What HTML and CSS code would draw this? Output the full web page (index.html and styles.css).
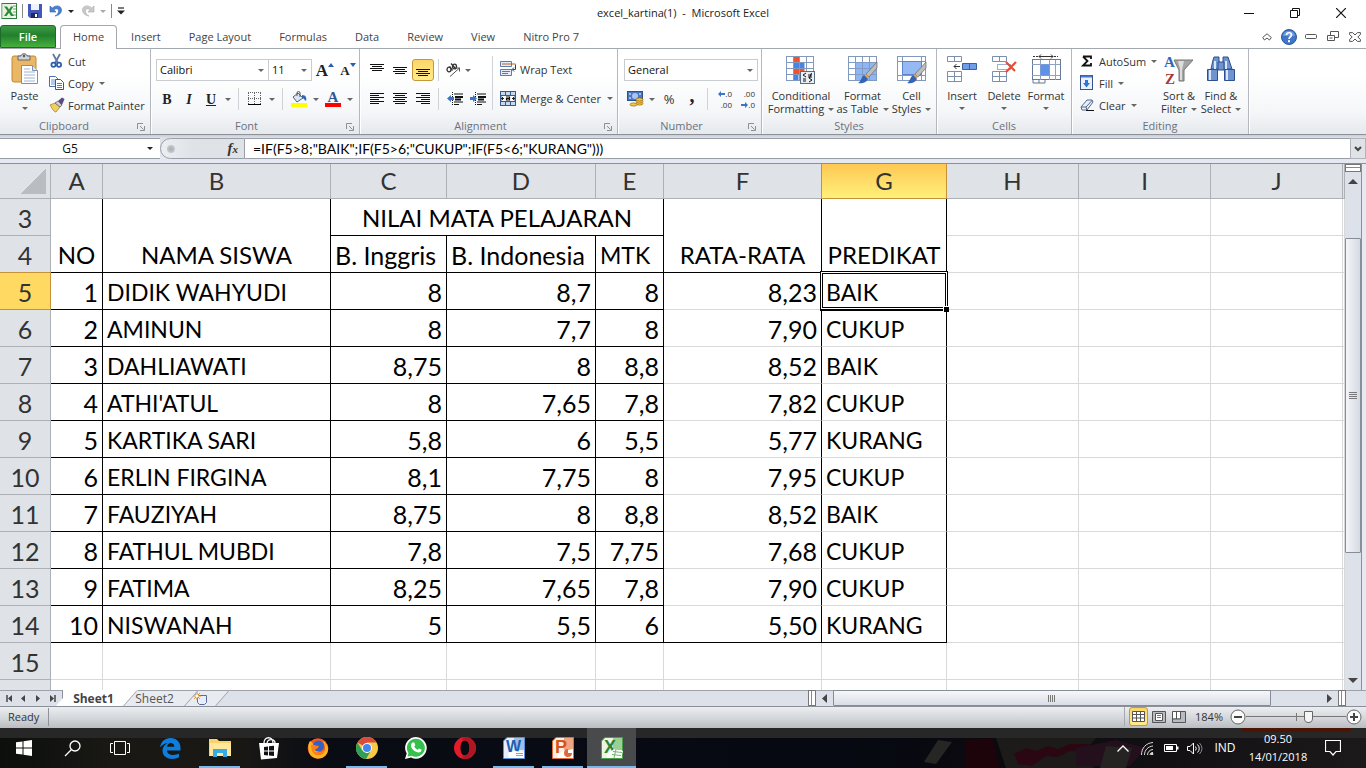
FILE: index.html
```html
<!DOCTYPE html>
<html lang="en">
<head>
	<meta charset="UTF-8">
	<title>excel_kartina(1) - Microsoft Excel</title>
	<link rel="stylesheet" href="styles.css">
</head>
<body>
	<header class="titlebar">
		<div class="quick">
			<svg width="16" height="16" viewBox="0 0 16 16"><rect x="1" y="0.5" width="14.500" height="15" fill="#fff" stroke="#2d7d3a"/><rect x="1.500" y="1" width="10" height="14" fill="#e4f2df"/><path d="M12 3h3M12 6h3M12 9h3M12 12h3" stroke="#58a55c"/><path d="M3 3.500h3l2 3 2-3h2.500L9.500 8l3.500 5h-3L8 9.800 5.500 13H3l3.500-5z" fill="#2b8a35"/></svg>
			<i class="line"></i>
			<button aria-label="Save"><svg width="14" height="14" viewBox="0 0 14 14"><path d="M0 0h14v14H2l-2-2z" fill="#4257b8"/><path d="M3 0h8v6H3z" fill="#eef2fb"/><path d="M3 9h7v5H3z" fill="#20285e"/><path d="M7 10h2v3H7z" fill="#fff"/></svg></button>
			<button class="wide" aria-label="Undo"><svg width="14" height="14" viewBox="0 0 14 14"><path d="M1 2v6h6L5 6c2-2 5-1.500 4.500 1.500C9.300 9.500 8 11 6 12c4-.5 6.500-3 6.500-6C12.500 1.500 7 .5 3.200 4z" fill="#4a80d4" stroke="#2b5fae" stroke-width=".6"/></svg><i class="arr black"></i></button>
			<button class="wide" aria-label="Redo"><svg width="14" height="14" viewBox="0 0 14 14"><path d="M13 2v6H7l2-2c-2-2-5-1.500-4.500 1.500C4.700 9.500 6 11 8 12 4 11.500 1.500 9 1.500 6 1.500 1.500 7 .5 10.800 4z" fill="#c9c9c9" stroke="#aaa" stroke-width=".6"/></svg><i class="arr pale"></i></button>
			<i class="line"></i>
			<button aria-label="Customize Quick Access Toolbar"><svg width="8" height="8" viewBox="0 0 8 8"><path d="M1 1h6" stroke="#222" stroke-width="1.200"/><path d="M0 3.500h8L4 7.500z" fill="#222"/></svg></button>
		</div>
		<h1>excel_kartina(1)&nbsp; -&nbsp; Microsoft Excel</h1>
		<div class="winbtns">
			<button aria-label="Minimize"><svg width="10" height="10"><path d="M0 5.500h10" stroke="#111"/></svg></button>
			<button aria-label="Restore"><svg width="10" height="10" fill="none" stroke="#111"><path d="M.5 2.500h7v7h-7zM2.500 2.500v-2h7v7h-2"/></svg></button>
			<button aria-label="Close"><svg width="10" height="10"><path d="M0 0l10 10M10 0L0 10" stroke="#111" stroke-width="1.200"/></svg></button>
		</div>
	</header>

	<nav class="tabs">
		<button class="file">File</button>
		<button class="on">Home</button>
		<button>Insert</button>
		<button>Page Layout</button>
		<button>Formulas</button>
		<button>Data</button>
		<button>Review</button>
		<button>View</button>
		<button>Nitro Pro 7</button>
		<div class="docbtns">
			<button aria-label="Minimize the Ribbon"><svg width="10" height="8" viewBox="0 0 10 8"><path d="M.7 4.500L5 .8l4.300 3.700L7.500 7 5 5 2.500 7z" fill="#fff" stroke="#555"/></svg></button>
			<button aria-label="Help"><svg width="16" height="16" viewBox="0 0 16 16"><circle cx="8" cy="8" r="7.500" fill="#3f76c6" stroke="#2a56a0"/><path d="M2 7a6 5 0 0 1 12 0z" fill="#6d9be0"/><path d="M5.500 6C5.500 3 10.500 3 10.500 6 10.500 7.800 8 7.800 8 10" fill="none" stroke="#fff" stroke-width="1.700"/><rect x="7" y="11.200" width="2" height="2" fill="#fff"/></svg></button>
			<button aria-label="Minimize Window"><svg width="12" height="6"><rect x=".5" y=".5" width="11" height="4" rx="1" fill="#fff" stroke="#555"/></svg></button>
			<button aria-label="Restore Window"><svg width="12" height="11" fill="#fff" stroke="#555"><path d="M3.500.5h8v6h-8z"/><path d="M.5 4.500h7v5h-7z"/><path d="M2.500 7h3"/></svg></button>
			<button aria-label="Close Window"><svg width="12" height="10" viewBox="0 0 12 10"><path d="M.6.6h3L6 3 8.400.6h3v2L8.800 5l2.600 2.400v2h-3L6 7 3.600 9.400h-3v-2L3.200 5 .6 2.600z" fill="#fff" stroke="#555"/></svg></button>
		</div>
	</nav>

	<div class="ribbon">
		<section class="group clipboard">
			<div class="tools">
				<button class="big"><svg width="32" height="32" viewBox="0 0 32 32"><rect x="3" y="3" width="24" height="26" rx="2" fill="#e9b765" stroke="#c08a35"/><path d="M9 3h3c0-3 6-3 6 0h3v4H9z" fill="#cfd3d8" stroke="#666"/><circle cx="15" cy="3" r="1.200" fill="#555"/><path d="M12.500 12.500h11l5 5v13h-16z" fill="#fff" stroke="#7c8fb0"/><path d="M23.500 12.500v5h5" fill="#dfe7f3" stroke="#7c8fb0"/><path d="M15 16h6M15 19h11M15 22h11M15 25h11M15 28h11" stroke="#9db4d6"/></svg><span>Paste</span><i class="arr"></i></button>
				<div class="stack">
					<button><svg width="16" height="16" viewBox="0 0 16 16"><path d="M4 1l5 9M11 1L6 10" stroke="#63779b" stroke-width="1.800" fill="none"/><g fill="none" stroke="#2b5fae" stroke-width="1.800"><circle cx="4.500" cy="11.800" r="2.100"/><circle cx="10" cy="11.800" r="2.100"/></g></svg>Cut</button>
					<button><svg width="16" height="16" viewBox="0 0 16 16"><path d="M.5 1.500h6l3 3v7h-9z" fill="#fff" stroke="#4a6fae"/><path d="M2 5h4M2 7h4M2 9h4" stroke="#6c92cf"/><path d="M6.500 4.500h5l3 3v7h-8z" fill="#fff" stroke="#2f569c"/><path d="M8 8.500h5M8 10.500h5M8 12.500h5" stroke="#4f7ac0"/></svg>Copy<i class="arr"></i></button>
					<button><svg width="16" height="16" viewBox="0 0 16 16"><path d="M1 8l5-2 5 4-4 5c-2 0-3-2-6-7z" fill="#f0cf62" stroke="#9b7a22" stroke-width=".7"/><path d="M6 6l3-2 4 4-2 2z" fill="#ccc" stroke="#555" stroke-width=".7"/><path d="M9 4l4-3.500 2.500 1.500-2.500 6z" fill="#5b4a86"/></svg>Format Painter</button>
				</div>
			</div>
			<footer>Clipboard<svg class="launch" width="8" height="8"><path d="M.5 6V.5H6M3 3l3.500 3.500M7.500 3v4.500H3" fill="none" stroke="#8b9097"/></svg></footer>
		</section>

		<section class="group font">
			<div class="rows">
				<div class="row">
					<label class="pick family"><select aria-label="Font"><option>Calibri</option></select></label>
					<label class="pick size"><select aria-label="Font size"><option>11</option></select></label>
					<button class="ib grow" aria-label="Grow Font"><b class="serif big-a">A</b><svg width="6" height="4"><path d="M0 4l3-4 3 4z" fill="#2b5fae"/></svg></button>
					<button class="ib" aria-label="Shrink Font"><b class="serif small-a">A</b><svg width="6" height="4"><path d="M0 0l3 4 3-4z" fill="#2b5fae"/></svg></button>
				</div>
				<div class="row">
					<button class="ib"><b class="serif">B</b></button>
					<button class="ib"><b class="serif"><em>I</em></b></button>
					<button class="ib"><b class="serif"><u>U</u></b></button>
					<i class="dd"></i>
					<i class="vsep"></i>
					<button class="ib" aria-label="Borders"><svg width="14" height="14"><path d="M.5 1v11M6.500 1v11M12.500 1v11M0 .5h13M0 6.500h13" stroke="#666" stroke-dasharray="1 1"/><path d="M0 12.500h13" stroke="#000"/></svg></button>
					<i class="dd"></i>
					<i class="vsep"></i>
					<button class="ib" aria-label="Fill Color"><svg width="18" height="17" viewBox="0 0 18 17"><path d="M3 6l5-4 5 5-6 4z" fill="#dce6f2" stroke="#46618c"/><path d="M7 5V2a1.500 1.500 0 0 1 3 0v4" fill="none" stroke="#555"/><path d="M12 4c4 0 5 3 4 6-2-1-2-3-4-3z" fill="#2f67b8"/><rect x="1" y="12" width="16" height="4" fill="#ff0"/></svg></button>
					<i class="dd"></i>
					<button class="ib fontcolor" aria-label="Font Color"><b class="serif">A</b></button>
					<i class="dd"></i>
				</div>
			</div>
			<footer>Font<svg class="launch" width="8" height="8"><path d="M.5 6V.5H6M3 3l3.500 3.500M7.500 3v4.500H3" fill="none" stroke="#8b9097"/></svg></footer>
		</section>

		<section class="group align">
			<div class="rows spaced">
				<div class="row">
					<button class="ib" aria-label="Top Align"><svg width="14" height="14"><path d="M0 1.500h14M2 3.500h10M0 5.500h14M2 7.500h10" stroke="#111"/></svg></button>
					<button class="ib" aria-label="Middle Align"><svg width="14" height="14"><path d="M0 4.500h14M2 6.500h10M0 8.500h14M2 10.500h10" stroke="#111"/></svg></button>
					<button class="ib hot" aria-label="Bottom Align"><svg width="14" height="14"><path d="M0 6.500h14M2 8.500h10M0 10.500h14M2 12.500h10" stroke="#111"/></svg></button>
					<i class="vsep"></i>
					<button class="ib slim" aria-label="Orientation"><svg width="16" height="16" viewBox="0 0 16 16" fill="none" stroke="#333" stroke-width="1.300"><ellipse cx="4" cy="7.500" rx="2" ry="2.300"/><path d="M4.500 4.500l3 4M6 1.500l5 5.500"/><ellipse cx="9.500" cy="4.500" rx="2" ry="2.300"/><path d="M5 14.500L14.500 6M11 6h3.500v3.500" stroke="#555" stroke-width="1"/></svg></button>
					<i class="dd"></i>
				</div>
				<div class="row">
					<button class="ib" aria-label="Align Left"><svg width="14" height="12"><path d="M0 .5h14M0 2.500h9M0 4.500h14M0 6.500h9M0 8.500h14M0 10.500h9" stroke="#111"/></svg></button>
					<button class="ib" aria-label="Center"><svg width="14" height="12"><path d="M0 .5h14M2 2.500h10M0 4.500h14M2 6.500h10M0 8.500h14M2 10.500h10" stroke="#111"/></svg></button>
					<button class="ib" aria-label="Align Right"><svg width="14" height="12"><path d="M0 .5h14M5 2.500h9M0 4.500h14M5 6.500h9M0 8.500h14M5 10.500h9" stroke="#111"/></svg></button>
					<i class="vsep"></i>
					<button class="ib" aria-label="Decrease Indent"><svg width="16" height="14"><path d="M7 2h9M7 10h9M7 12.500h5" stroke="#111"/><path d="M8 5h8M8 7.500h6" stroke="#111" stroke-width="2"/><path d="M5.500 0v14" stroke="#111" stroke-dasharray="1 1"/><path d="M0 6.500L4 3v2h3v3H4v2z" fill="#3b74c8"/></svg></button>
					<button class="ib" aria-label="Increase Indent"><svg width="16" height="14"><path d="M7 2h9M7 10h9M7 12.500h5" stroke="#111"/><path d="M8 5h8M8 7.500h6" stroke="#111" stroke-width="2"/><path d="M5.500 0v14" stroke="#111" stroke-dasharray="1 1"/><path d="M7 6.500L3 3v2H0v3h3v2z" fill="#3b74c8"/></svg></button>
				</div>
			</div>
			<i class="vsep tall"></i>
			<div class="rows">
				<div class="row">
					<button class="text"><svg width="16" height="16" viewBox="0 0 16 16"><path d="M.5.500h11v5H.5zM.5 8.500h11v6H.5z" fill="#e6edf8" stroke="#5c7bb0"/><path d="M2 3h13.500" stroke="#b06820"/><path d="M2 10.500h8M2 12.500h6" stroke="#b06820"/><path d="M15.500 3.500v5h-3M14 6.500l-2 2 2 2" stroke="#2b3f66" fill="none"/></svg>Wrap Text</button>
				</div>
				<div class="row">
					<button class="text"><svg width="16" height="15" viewBox="0 0 16 15"><rect x=".5" y=".5" width="15" height="14" fill="#c8d8ef" stroke="#37598f"/><path d="M5.500 1v3M10.500 1v3M5.500 11v3M10.500 11v3" stroke="#37598f"/><path d="M1 4.500h14v6H1z" fill="#fff" stroke="#37598f"/><path d="M1 7.500h3M12 7.500h3M3 6l-1.500 1.500L3 9M13 6l1.500 1.500L13 9" stroke="#222" fill="none"/><path d="M6 6h3.500v3.500M9.500 7.500H6.500v1.500h3" stroke="#111" fill="none" stroke-width="1.200"/></svg>Merge &amp; Center<i class="arr"></i></button>
				</div>
			</div>
			<footer>Alignment<svg class="launch" width="8" height="8"><path d="M.5 6V.5H6M3 3l3.500 3.500M7.500 3v4.500H3" fill="none" stroke="#8b9097"/></svg></footer>
		</section>

		<section class="group number">
			<div class="rows">
				<div class="row">
					<label class="pick format"><select aria-label="Number format"><option>General</option></select></label>
				</div>
				<div class="row spaced">
					<button class="ib" aria-label="Accounting Number Format"><svg width="17" height="16" viewBox="0 0 17 16"><rect x=".5" y=".5" width="15" height="9" fill="#4a78c4" stroke="#2c4f92"/><circle cx="8" cy="5" r="3" fill="#a9c5ee"/><path d="M2 3h2M12 3h2M2 7h2" stroke="#fff"/><g fill="#f4c542" stroke="#96690d" stroke-width=".7"><ellipse cx="12.500" cy="12.500" rx="3.500" ry="1.600"/><ellipse cx="12.500" cy="10.500" rx="3.500" ry="1.600"/><ellipse cx="12.500" cy="8.500" rx="3.500" ry="1.600"/><ellipse cx="6.500" cy="13.500" rx="3.500" ry="1.600"/></g></svg></button>
					<i class="dd"></i>
					<button class="ib percentbtn">%</button>
					<button class="ib"><b class="comma">,</b></button>
					<i class="vsep"></i>
					<button class="ib dec"><span><svg width="7" height="6"><path d="M0 3l3-3v2h4v2H3v2z" fill="#3b74c8"/></svg>.0</span><span>.00</span></button>
					<button class="ib dec"><span>.00</span><span><svg width="7" height="6"><path d="M7 3L4 0v2H0v2h4v2z" fill="#3b74c8"/></svg>.0</span></button>
				</div>
			</div>
			<footer>Number<svg class="launch" width="8" height="8"><path d="M.5 6V.5H6M3 3l3.500 3.500M7.500 3v4.500H3" fill="none" stroke="#8b9097"/></svg></footer>
		</section>

		<section class="group styles">
			<div class="tools">
				<button class="big"><svg width="32" height="32" viewBox="0 0 32 32"><rect x="1.500" y="3.500" width="27" height="24" fill="#fff" stroke="#8299bd"/><path d="M8.500 4h6v5h-6z" fill="#f0512f"/><path d="M8.500 9h11v6h-11z" fill="#4a83e0"/><path d="M8.500 15h11v6h-11z" fill="#f0512f"/><path d="M8.500 21h5v6h-5z" fill="#4a83e0"/><path d="M1 9.500h27M1 15.500h27M1 21.500h27M8.500 4v24M14.500 4v24M21.500 4v24" stroke="#8299bd"/><rect x="15.500" y="18.500" width="14" height="12" fill="#e9f0f5" stroke="#5a6c80"/><path d="M21 20l-3 2 3 2M18 26h3M18 28h3M23 22h4M23 24h4M26.500 20l-2 5M24 25l3 2-3 2" fill="none" stroke="#111"/></svg><span>Conditional<br>Formatting<i class="arr"></i></span></button>
				<button class="big"><svg width="32" height="32" viewBox="0 0 32 32"><rect x="1.500" y="3.500" width="28" height="24" fill="#fff" stroke="#8299bd"/><path d="M8 9h21v18H8z" fill="#8fb5f2"/><path d="M1 9.500h28M1 15.500h28M1 21.500h28M8.500 4v24M15.500 4v24M22.500 4v24" stroke="#7f9cc9"/><path d="M30 9v6L22 24l-3-3z" fill="#bdbdbd" stroke="#666" stroke-width=".7"/><path d="M19 21l3 3-2 2-3-3z" fill="#e9a046"/><path d="M17 22l4 4c-2 4-6 5-10 4 3-1 3-6 6-8z" fill="#3265b5"/></svg><span>Format<br>as Table<i class="arr"></i></span></button>
				<button class="big"><svg width="32" height="32" viewBox="0 0 32 32"><rect x="1.500" y="3.500" width="28" height="24" fill="#fff" stroke="#8299bd"/><path d="M1 8.500h28M1 22.500h28M6.500 4v24M25.500 4v24" stroke="#8299bd"/><path d="M6.500 8.500h19v13h-19z" fill="#94b9f3" stroke="#5b86cf"/><path d="M30 9v6L22 24l-3-3z" fill="#bdbdbd" stroke="#666" stroke-width=".7"/><path d="M19 21l3 3-2 2-3-3z" fill="#e9a046"/><path d="M17 22l4 4c-2 4-6 5-10 4 3-1 3-6 6-8z" fill="#3265b5"/></svg><span>Cell<br>Styles<i class="arr"></i></span></button>
			</div>
			<footer>Styles</footer>
		</section>

		<section class="group cells">
			<div class="tools">
				<button class="big"><svg width="32" height="32" viewBox="0 0 32 32"><path d="M1.500 3.500h14v5h-14zM8.500 3.500v5M1.500 18.500h14v10h-14zM8.500 18.500v10M1.500 23.500h14" fill="#fff" stroke="#7b8fae"/><path d="M16.500 10.500h14v6h-14zM23.500 10.500v6" fill="#6f9de8" stroke="#3d5f9e"/><path d="M14 13.500H8M10.500 11L8 13.500l2.500 2.500" fill="none" stroke="#333"/></svg><span>Insert</span><i class="arr"></i></button>
				<button class="big"><svg width="32" height="32" viewBox="0 0 32 32"><path d="M4.500 3.500h14v5h-14zM11.500 3.500v5M4.500 18.500h14v10h-14zM11.500 18.500v10M4.500 23.500h14" fill="#fff" stroke="#7b8fae"/><path d="M9.500 11.500h13v5h-13z" fill="none" stroke="#3d5f9e" stroke-dasharray="1 1"/><path d="M18 9l9 9M28 9l-10 10" stroke="#ee4a30" stroke-width="2.200"/></svg><span>Delete</span><i class="arr"></i></button>
				<button class="big"><svg width="32" height="32" viewBox="0 0 32 32"><path d="M3 3.500h25" stroke="#333" stroke-dasharray="2 1"/><path d="M9 3.500h14M11 1.500l-2 2 2 2M21 1.500l2 2-2 2" stroke="#333" fill="none"/><rect x="2.500" y="6.500" width="28" height="20" fill="#fff" stroke="#66799a"/><path d="M2 11.500h28M2 22.500h28M10.500 7v20M19.500 7v20M25.500 7v20" stroke="#8ea3c4"/><path d="M10.500 11.500h9v11h-9z" fill="#5f92e6"/><path d="M3 27v3h12v-3M9 27v3" fill="none" stroke="#66799a"/></svg><span>Format</span><i class="arr"></i></button>
			</div>
			<footer>Cells</footer>
		</section>

		<section class="group editing">
			<div class="tools">
				<div class="stack">
					<button><svg width="14" height="14" viewBox="0 0 14 14"><path d="M3 2.500h8V5M3 2.500L7.500 7 3 11.500h8V9" fill="none" stroke="#111" stroke-width="1.800"/></svg>AutoSum<i class="arr"></i></button>
					<button><svg width="14" height="16" viewBox="0 0 14 16"><rect x=".5" y=".5" width="12" height="14" fill="#eaf1fb" stroke="#33528f"/><path d="M1 1.500h11" stroke="#4a78c4" stroke-width="2"/><path d="M5 5h3v3h2l-3.500 4.500L3 8h2z" fill="#2f72dc"/></svg>Fill<i class="arr"></i></button>
					<button><svg width="14" height="14" viewBox="0 0 14 14"><path d="M1 9l6-7h5l1 2-6 8H2z" fill="#e8eff9" stroke="#54698e"/><path d="M1 9h5l1 3M6 9l6.500-7" fill="none" stroke="#54698e"/><path d="M6 12.500h8" stroke="#111"/></svg>Clear<i class="arr"></i></button>
				</div>
				<button class="big"><svg width="32" height="32" viewBox="0 0 32 32"><path d="M11 7h19L21 17v11h-5V17z" fill="#a4a4a4" stroke="#777"/><path d="M15 8h6l-2 9v10h-2V16z" fill="#ddd"/><text x="1" y="14" font-family="Liberation Serif" font-weight="bold" font-size="15" fill="#2f67b8">A</text><text x="2" y="31" font-family="Liberation Serif" font-weight="bold" font-size="15" fill="#a33a3a">Z</text></svg><span>Sort &amp;<br>Filter<i class="arr"></i></span></button>
				<button class="big"><svg width="32" height="32" viewBox="0 0 32 32"><g fill="#6f94cd" stroke="#2d4f8e"><path d="M9 4h5v3l1 9H6l2-9zM18 4h5l1 3 3 9h-9z"/><path d="M2.500 16.500h10v11h-10zM19.500 16.500h10v11h-10z"/><path d="M13 9h6v8h-6z"/></g><path d="M5 17v10M22 17v10M10 8v8M21 8v8" stroke="#d8e5fa" stroke-width="2"/></svg><span>Find &amp;<br>Select<i class="arr"></i></span></button>
			</div>
			<footer>Editing</footer>
		</section>
	</div>

	<div class="formulabar">
		<div class="namebox"><input type="text" value="G5" aria-label="Name Box"><i class="arr black"></i></div>
		<div class="fx"><i class="knob"></i><button aria-label="Insert Function"><em>f</em><small>x</small></button></div>
		<input class="formula" type="text" aria-label="Formula" value='=IF(F5&gt;8;"BAIK";IF(F5&gt;6;"CUKUP";IF(F5&lt;6;"KURANG")))'>
		<button class="expand" aria-label="Expand Formula Bar"><svg width="8" height="6"><path d="M1 1l3 3 3-3" stroke="#444" stroke-width="2" fill="none"/></svg></button>
	</div>

	<main class="work">
		<div class="sheet">
			<table>
				<colgroup><col class="c0"><col class="ca"><col class="cb"><col class="cc"><col class="cd"><col class="ce"><col class="cf"><col class="cg"><col class="ch"><col class="ch"><col class="ch"><col></colgroup>
				<thead>
					<tr><th class="corner"></th><th>A</th><th>B</th><th>C</th><th>D</th><th>E</th><th>F</th><th class="sel">G</th><th>H</th><th>I</th><th>J</th><th></th></tr>
				</thead>
				<tbody>
					<tr><th>3</th><td class="k c" rowspan="2">NO</td><td class="k c" rowspan="2">NAMA SISWA</td><td class="k c" colspan="3">NILAI MATA PELAJARAN</td><td class="k c" rowspan="2">RATA-RATA</td><td class="k c" rowspan="2">PREDIKAT</td><td></td><td></td><td></td><td></td></tr>
					<tr><th>4</th><td class="k">B. Inggris</td><td class="k">B. Indonesia</td><td class="k t">MTK</td><td></td><td></td><td></td><td></td></tr>
					<tr><th class="sel">5</th><td class="k n">1</td><td class="k t">DIDIK WAHYUDI</td><td class="k n">8</td><td class="k n">8,7</td><td class="k n">8</td><td class="v n">8,23</td><td class="v t active">BAIK</td><td></td><td></td><td></td><td></td></tr>
					<tr><th>6</th><td class="k n">2</td><td class="k t">AMINUN</td><td class="k n">8</td><td class="k n">7,7</td><td class="k n">8</td><td class="v n">7,90</td><td class="v t">CUKUP</td><td></td><td></td><td></td><td></td></tr>
					<tr><th>7</th><td class="k n">3</td><td class="k t">DAHLIAWATI</td><td class="k n">8,75</td><td class="k n">8</td><td class="k n">8,8</td><td class="v n">8,52</td><td class="v t">BAIK</td><td></td><td></td><td></td><td></td></tr>
					<tr><th>8</th><td class="k n">4</td><td class="k t">ATHI'ATUL</td><td class="k n">8</td><td class="k n">7,65</td><td class="k n">7,8</td><td class="v n">7,82</td><td class="v t">CUKUP</td><td></td><td></td><td></td><td></td></tr>
					<tr><th>9</th><td class="k n">5</td><td class="k t">KARTIKA SARI</td><td class="k n">5,8</td><td class="k n">6</td><td class="k n">5,5</td><td class="v n">5,77</td><td class="v t">KURANG</td><td></td><td></td><td></td><td></td></tr>
					<tr><th>10</th><td class="k n">6</td><td class="k t">ERLIN FIRGINA</td><td class="k n">8,1</td><td class="k n">7,75</td><td class="k n">8</td><td class="v n">7,95</td><td class="v t">CUKUP</td><td></td><td></td><td></td><td></td></tr>
					<tr><th>11</th><td class="k n">7</td><td class="k t">FAUZIYAH</td><td class="k n">8,75</td><td class="k n">8</td><td class="k n">8,8</td><td class="v n">8,52</td><td class="v t">BAIK</td><td></td><td></td><td></td><td></td></tr>
					<tr><th>12</th><td class="k n">8</td><td class="k t">FATHUL MUBDI</td><td class="k n">7,8</td><td class="k n">7,5</td><td class="k n">7,75</td><td class="v n">7,68</td><td class="v t">CUKUP</td><td></td><td></td><td></td><td></td></tr>
					<tr><th>13</th><td class="k n">9</td><td class="k t">FATIMA</td><td class="k n">8,25</td><td class="k n">7,65</td><td class="k n">7,8</td><td class="v n">7,90</td><td class="v t">CUKUP</td><td></td><td></td><td></td><td></td></tr>
					<tr><th>14</th><td class="k n">10</td><td class="k t">NISWANAH</td><td class="k n">5</td><td class="k n">5,5</td><td class="k n">6</td><td class="k n">5,50</td><td class="k t">KURANG</td><td></td><td></td><td></td><td></td></tr>
					<tr><th>15</th><td></td><td></td><td></td><td></td><td></td><td></td><td></td><td></td><td></td><td></td><td></td></tr>
					<tr><th></th><td></td><td></td><td></td><td></td><td></td><td></td><td></td><td></td><td></td><td></td><td></td></tr>
				</tbody>
			</table>
		</div>
		<div class="vscroll">
			<i class="split"></i>
			<button aria-label="Scroll up"><svg width="10" height="5"><path d="M0 5l5-5 5 5z" fill="#444"/></svg></button>
			<i class="before"></i>
			<div class="thumb"></div>
			<i class="after"></i>
			<button aria-label="Scroll down"><svg width="10" height="5"><path d="M0 0l5 5 5-5z" fill="#444"/></svg></button>
		</div>
	</main>

	<div class="sheetbar">
		<div class="sheets">
			<div class="navs">
				<button aria-label="First sheet"><svg width="7" height="7"><path d="M1 0v7" stroke="#444" stroke-width="1.500"/><path d="M6 0v7L2 3.500z" fill="#444"/></svg></button>
				<button aria-label="Previous sheet"><svg width="7" height="7"><path d="M5 0v7L1 3.500z" fill="#444"/></svg></button>
				<button aria-label="Next sheet"><svg width="7" height="7"><path d="M1 0v7l4-3.500z" fill="#444"/></svg></button>
				<button aria-label="Last sheet"><svg width="7" height="7"><path d="M6 0v7" stroke="#444" stroke-width="1.500"/><path d="M1 0v7l4-3.500z" fill="#444"/></svg></button>
			</div>
			<button class="tab on"><span>Sheet1</span></button>
			<button class="tab"><span>Sheet2</span></button>
			<button class="tab new" aria-label="Insert Worksheet"><span><svg width="15" height="13" viewBox="0 0 15 13"><path d="M4.500 3.500h9v7l-2 2h-5l-2-2z" fill="#e8edfb" stroke="#5b6b9c"/><path d="M4 0v8M0 4h8M1.200 1.200l5.600 5.600M6.800 1.200L1.200 6.800" stroke="#d98a1f"/><circle cx="4" cy="4" r="1.500" fill="#fff"/></svg></span></button>
		</div>
		<div class="hscroll">
			<i class="split"></i>
			<button aria-label="Scroll left"><svg width="5" height="9"><path d="M5 0v9L0 4.500z" fill="#444"/></svg></button>
			<div class="thumb"></div>
			<i class="after"></i>
			<button aria-label="Scroll right"><svg width="5" height="9"><path d="M0 0v9l5-4.500z" fill="#444"/></svg></button>
			<i class="split"></i>
		</div>
	</div>

	<div class="status">
		<span class="ready">Ready</span>
		<div class="views">
			<button class="hot" aria-label="Normal"><svg width="13" height="11"><path d="M.5.500h12v10H.5zM.5 3.500h12M.5 7h12M4.500.5v10M8.500.5v10" fill="#fff" stroke="#555"/></svg></button>
			<button aria-label="Page Layout"><svg width="14" height="12"><path d="M.5.500h13v11H.5z" fill="#b8bcc2" stroke="#555"/><path d="M3.500 2.500h7v7h-7z" fill="#fff" stroke="#555"/><path d="M5 4.500h4M5 6.500h4" stroke="#777"/></svg></button>
			<button aria-label="Page Break Preview"><svg width="14" height="12"><path d="M.5.500h13v11H.5z" fill="#b8bcc2" stroke="#555"/><path d="M1 1h3v6H1zM5 1h3v6H5z" fill="#fff"/><path d="M4.500 1v7M8.500 1v7H1" stroke="#555" fill="none"/></svg></button>
		</div>
		<span class="percent">184%</span>
		<div class="zoom">
			<button aria-label="Zoom out"><svg width="16" height="16"><circle cx="8" cy="8" r="7" fill="#fbfbfb" stroke="#666"/><path d="M4 8h8" stroke="#444" stroke-width="2"/></svg></button>
			<input type="range" min="0" max="100" value="64" aria-label="Zoom">
			<button aria-label="Zoom in"><svg width="16" height="16"><circle cx="8" cy="8" r="7" fill="#fbfbfb" stroke="#666"/><path d="M4 8h8M8 4v8" stroke="#444" stroke-width="2"/></svg></button>
		</div>
	</div>

	<footer class="taskbar">
		<svg class="wall" width="760" height="40" viewBox="0 0 760 40" aria-hidden="true"><path d="M390 10h100l-12 14 10 16H400z" fill="#1c1b1a"/><path d="M360 12l26-2 8 30h-34z" fill="#1c040a"/><path d="M408 26l12-6 10 3 12-5 10 3 12-5 20 0-6 8-14-1-12 6-12-1-14 10-14-2z" fill="#2b0714"/><path d="M318 34l14-22 14 2-16 22z" fill="#262624"/><path d="M470 20l40-8 30 8-16 18h-54z" fill="#23101c"/><path d="M500 18l26 2-6 20h-26z" fill="#252422"/><path d="M635 0h110v4H635z" fill="#4a1507"/></svg>
		<button class="tb"><svg width="16" height="16" fill="#fff" role="img" aria-label="Start"><path d="M0 2.300l6.500-.9v6.100H0zM7.500 1.200L16 0v7.500H7.500zM0 8.500h6.500v6.100L0 13.700zM7.500 8.500H16V16l-8.500-1.200z"/></svg></button>
		<button class="tb"><svg width="17" height="17" role="img" aria-label="Search"><circle cx="11" cy="6" r="5" fill="none" stroke="#fff" stroke-width="1.300"/><path d="M7.500 9.500L1 16" stroke="#fff" stroke-width="1.300"/></svg></button>
		<button class="tb"><svg width="20" height="14" role="img" aria-label="Task View"><path d="M4.500.500h11v13h-11zM3 2.500H.5v9H3M17 2.500h2.500v9H17" fill="none" stroke="#fff"/></svg></button>
		<div class="apps">
			<button><svg width="21" height="21" viewBox="0 0 21 21" role="img" aria-label="Edge"><path d="M0 9.500C1 3.500 5 0 10.500 0 17 0 20.500 4.500 20.500 10v2.500H7c.2 5 7.500 5.500 12 3v3.800C12 23 2.500 20.500 2.500 12.500c0-3 2-6 5-7.500C4.500 5.500 2 7 0 9.500zM7 8.800h7.300c0-5-6.800-5-7.300 0z" fill="#0f7ddc"/></svg></button>
			<button class="run"><svg width="22" height="18" viewBox="0 0 22 18" role="img" aria-label="File Explorer"><path d="M0 0h8l2 2h12v15H0z" fill="#f8d36b"/><path d="M1 4h21v13H1z" fill="#ffe79b"/><path d="M4 10h14v8h-4v-4H8v4H4z" fill="#37abe3"/></svg></button>
			<button><svg width="22" height="24" viewBox="0 0 22 24" role="img" aria-label="Store"><path d="M1 7h20l-2 15-16 1.500z" fill="#fff"/><path d="M6 7c0-7 9-7 9 0M9 7c1-5 8-4 8 0" fill="none" stroke="#fff" stroke-width="1.300"/><path d="M6 11l4-.5v4H6zM11 10.300l5-.6v4.800h-5zM6 15.500h4v4L6 19zM11 15.500h5V20l-5-.5z" fill="#111"/></svg></button>
			<button><svg width="22" height="22" viewBox="0 0 22 22" role="img" aria-label="Firefox"><circle cx="11" cy="11.500" r="10.300" fill="#f4581e"/><path d="M3 4c3 2 4 4 4 5l4 2c3 3-1 6-5 5 6 4 12 1 12-5 0-3-1-5-3-7 6 2 8 9 4 14-5 6-15 4-17-3C1 11 1 7 3 4z" fill="#ffb321"/><circle cx="11.500" cy="9" r="5.500" fill="#3560c6"/><path d="M4 8c3-1 5 1 8 1-1 3-4 3-5 5 2 2 7 2 10-1-1 7-13 8-13-5z" fill="#ff7d1b"/></svg></button>
			<button class="run"><svg width="22" height="22" viewBox="0 0 22 22" role="img" aria-label="Chrome"><circle cx="11" cy="11" r="11" fill="#f7ca45"/><path d="M11 11L1.500 5.500A11 11 0 0 1 20.500 5.500H11z" fill="#d84c3e"/><path d="M1.500 5.500A11 11 0 0 0 10 22l5-8.500-4 2.500-5-3z" fill="#2f9e58"/><circle cx="11" cy="11" r="5" fill="#fff"/><circle cx="11" cy="11" r="4" fill="#4585ee"/></svg></button>
			<button><svg width="22" height="22" viewBox="0 0 22 22" role="img" aria-label="WhatsApp"><path d="M0 22l1.700-5.500A10.800 10.800 0 1 1 6 20.500z" fill="#fff"/><path d="M2.500 19.500l1-3.500A9 9 0 1 1 6.500 18.700z" fill="#33c04b"/><path d="M7.500 5.500l1.800 0 1 2.800-1 1.200c1 1.800 2 2.500 3.500 3.200l1.200-1.300 2.500 1.200c.5 3-3 3.500-5 2.500-3-1.200-5-3.500-5.500-5.800-.3-1.500.3-3 1.500-3.800z" fill="#fff"/></svg></button>
			<button><svg width="22" height="22" viewBox="0 0 22 22" role="img" aria-label="Opera"><path fill-rule="evenodd" d="M11 0a11 11 0 1 0 0 22 11 11 0 1 0 0-22zm0 3.500c3 0 4.500 3.500 4.500 7.500s-1.500 7.500-4.500 7.500S6.500 15 6.500 11 8 3.500 11 3.500z" fill="#e31b2b"/><path d="M11 0c-2 1-3 2-2 3.500 5-.5 6.500 3.500 6.500 7.500s-2 8-6.500 7.500c-1 1.500 0 2.500 2 3.500a11 11 0 0 0 0-22z" fill="#b01522"/></svg></button>
			<button class="run"><svg width="22" height="22" viewBox="0 0 22 22" role="img" aria-label="Word"><path d="M4 .5h17.500v21H.5V4z" fill="#e6effa" stroke="#5a8fd4"/><path d="M11 1h10v12H11z" fill="#9dbfe8"/><text x="3" y="15" font-family="Liberation Sans" font-weight="bold" font-size="16" fill="#1f5fb4">W</text><path d="M5 16l7-2 9 1v6H6z" fill="#fff"/><path d="M13 16.500h7M13 18.500h7" stroke="#7ea6dc"/></svg></button>
			<button class="run"><svg width="22" height="22" viewBox="0 0 22 22" role="img" aria-label="PowerPoint"><path d="M4 .5h17.500v21H.5V4z" fill="#fdeee5" stroke="#dd6a3a"/><path d="M12 1h9v12h-9z" fill="#f0a580"/><text x="3" y="16" font-family="Liberation Sans" font-weight="bold" font-size="18" fill="#d4541c">P</text><path d="M5 17l7-3 9-2v9H6z" fill="#fff"/><path d="M16 12a4 4 0 1 0 4 4h-4z" fill="#e2673a"/></svg></button>
			<button class="run current"><svg width="22" height="22" viewBox="0 0 22 22" role="img" aria-label="Excel"><path d="M4 .5h17.500v21H.5V4z" fill="#e9f6e6" stroke="#4c9e4c"/><path d="M12 1h9v12h-9z" fill="#9ccf94"/><text x="3" y="16" font-family="Liberation Sans" font-weight="bold" font-size="18" fill="#2b8433">X</text><path d="M6 18l7-6 9 2-2 7H6z" fill="#fff"/><path d="M12 14.500l9 1M11 17.500l9 1M15 12l-2 9" stroke="#71b56e"/></svg></button>
		</div>
		<div class="tray">
			<button aria-label="Show hidden icons"><svg width="12" height="7"><path d="M.5 6.500L6 1l5.500 5.500" fill="none" stroke="#fff" stroke-width="1.300"/></svg></button>
			<button aria-label="Network"><svg width="13" height="13" fill="none" stroke="#ddd"><path d="M.5 13C.5 6 5 1 12 .5M3.500 13c0-5 3.500-8.500 8.500-9M6.500 13c0-3 2.500-5.500 5.500-5.500M9 13c0-1.500 1-2.500 3-2.500"/><circle cx="11" cy="12" r="1" fill="#fff"/></svg></button>
			<button aria-label="Battery"><svg width="15" height="8"><path d="M.5.500h12v7H.5z" fill="none" stroke="#fff"/><path d="M2 2h7v4H2zM13 2.500h1.500v3H13z" fill="#fff"/></svg></button>
			<button aria-label="Volume"><svg width="16" height="13" fill="none" stroke="#fff"><path d="M.5 4.500h2.500l3.500-3.500v11L3 8.500H.5zM8.500 4.500q1.500 2 0 4M10.500 2.500q3.500 4 0 8"/><path d="M12.500 1q5 5.500 0 11" stroke="#888"/></svg></button>
			<button class="lang">IND</button>
			<button class="clock">09.50<br>14/01/2018</button>
			<button class="note" aria-label="Action Center"><svg width="16" height="16"><path d="M.5.500h15v11H11L8 15l-3-3.500H.5z" fill="none" stroke="#fff" stroke-width="1.200"/></svg></button>
		</div>
	</footer>
</body>
</html>
```

FILE: styles.css
```css
* {
	box-sizing: border-box;
	margin: 0;
	padding: 0;
}
body {
	display: flex;
	flex-direction: column;
	height: 100vh;
	overflow: hidden;
	background: #fff;
	color: #333;
	font: 11px/13px "Open Sans", "Noto Sans", sans-serif;
}
button {
	display: flex;
	align-items: center;
	justify-content: center;
	border: 0;
	background: none;
	color: inherit;
	font: inherit;
	white-space: nowrap;
}
input, select {
	border: 0;
	background: none;
	font: inherit;
	color: #111;
	outline: 0;
}
svg {
	flex: none;
	display: block;
}
.arr {
	display: inline-block;
	flex: none;
	width: 0;
	height: 0;
	border: 3px solid transparent;
	border-top-color: #666;
	border-bottom: 0;
}
.arr.black {
	border-top-color: #222;
}
.arr.pale {
	border-top-color: #aaa;
}

/* title bar */
.titlebar {
	display: grid;
	grid-template-columns: 1fr auto 1fr;
	align-items: center;
	height: 25px;
	flex: none;
}
.titlebar h1 {
	font-size: 11px;
	font-weight: 400;
	color: #222;
}
.quick {
	display: flex;
	align-items: center;
	gap: 5px;
	padding: 0 0 3px 1px;
}
.quick .line {
	width: 1px;
	height: 14px;
	background: #888;
}
.quick .wide {
	gap: 5px;
	padding-left: 2px;
}
.winbtns {
	display: flex;
	justify-content: flex-end;
	padding-right: 2px;
}
.winbtns button {
	width: 46px;
	height: 25px;
}

/* ribbon tabs */
.tabs {
	display: flex;
	height: 24px;
	flex: none;
	border-bottom: 1px solid #a3a8ae;
	color: #444;
}
.tabs > button {
	padding: 0 14px;
}
.tabs .file {
	width: 56px;
	margin-right: 4px;
	border: 1px solid #1c6b2a;
	border-radius: 3px 3px 0 0;
	background: linear-gradient(#3f9a45, #21802d 45%, #46b13c);
	color: #fff;
	font-weight: 600;
}
.tabs .on {
	padding: 0 12px 2px;
	height: 24px;
	border: 1px solid #a3a8ae;
	border-bottom: 0;
	border-radius: 4px 4px 0 0;
	background: #fff;
}
.docbtns {
	display: flex;
	margin-left: auto;
}
.docbtns button {
	width: 22px;
}

/* ribbon */
.ribbon {
	display: flex;
	flex: none;
	height: 86px;
	background: linear-gradient(#fff 30%, #f4f6f8 75%, #e6e9ed);
	border-bottom: 1px solid #8e9298;
}
.group {
	display: grid;
	grid-template: 69px 16px / auto 1fr;
	flex: none;
	border-right: 1px solid #b4b8be;
	box-shadow: 1px 0 #fff;
}
.group > footer {
	grid-column: 1 / -1;
	grid-row: 2;
	position: relative;
	text-align: center;
	line-height: 15px;
	color: #6b717c;
	padding-right: 22px;
}
.styles > footer, .cells > footer, .editing > footer {
	padding-right: 0;
}
.launch {
	position: absolute;
	right: 5px;
	top: 5px;
}
.clipboard { width: 151px; }
.font { width: 209px; padding-left: 5px; }
.align { width: 258px; padding-left: 6px; grid-template-columns: auto auto 1fr; }
.number { width: 144px; padding-left: 6px; }
.styles { width: 175px; }
.cells { width: 135px; }
.editing { width: 177px; }
.tools {
	display: flex;
	grid-column: 1 / -1;
}
.big {
	flex-direction: column;
	justify-content: flex-start;
	padding-top: 4px;
	width: 42px;
}
.big svg {
	margin-bottom: 4px;
}
.big > .arr {
	margin-top: 5px;
}
.big span .arr {
	margin: 0 0 2px 4px;
}
.clipboard .big {
	width: 49px;
}
.styles .big {
	width: 49px;
}
.styles .big:first-child {
	width: 74px;
	margin-left: 2px;
}
.cells .tools {
	padding-left: 4px;
}
.stack {
	padding-top: 1px;
}
.stack button {
	height: 22px;
	gap: 3px;
}
.stack .arr {
	margin-left: 2px;
}
.editing .stack {
	width: 86px;
	padding-left: 8px;
}
.editing .stack button {
	gap: 5px;
}
.editing .stack .arr {
	margin-left: 0;
}
.rows {
	display: flex;
	flex-direction: column;
	gap: 7px;
	padding-top: 10px;
}
.row {
	display: flex;
	align-items: center;
	height: 22px;
}
.spaced .ib + .ib {
	margin-left: 1px;
}
.ib {
	width: 22px;
	height: 22px;
	flex: none;
}
.ib.slim {
	width: 18px;
}
.hot {
	border: 1px solid #c29a3c;
	border-radius: 3px;
	background: linear-gradient(#fbd568, #ffe27a 50%, #ffec8c);
}
.dd {
	width: 12px;
	flex: none;
}
.dd::before {
	content: "";
	display: block;
	width: 0;
	margin: 0 auto;
	border: 3px solid transparent;
	border-top-color: #666;
	border-bottom: 0;
}
.vsep {
	width: 1px;
	height: 22px;
	flex: none;
	margin: 0 5px 0 4px;
	background: #cfd3d8;
}
.vsep.tall {
	height: 54px;
	margin: 7px 7px 0 3px;
}
.serif {
	font-family: "Liberation Serif", serif;
	font-size: 14px;
	color: #222;
}
.big-a {
	font-size: 17px;
}
.small-a {
	font-size: 13px;
}
.big-a + svg, .small-a + svg {
	align-self: flex-start;
	margin-top: 4px;
}
.grow {
	margin: 0 1px 0 2px;
}
.fontcolor .serif {
	width: 16px;
	height: 16px;
	line-height: 12px;
	font-size: 15px;
	color: #2f569c;
	border-bottom: 4px solid #f00;
}
.percentbtn {
	font-size: 13px;
}
.comma {
	font: bold 20px/8px "Liberation Serif", serif;
	color: #222;
	padding-bottom: 8px;
}
.dec {
	flex-direction: column;
	align-items: flex-end;
	font-size: 8px;
	line-height: 11px;
	padding-right: 3px;
}
.dec span {
	display: flex;
	align-items: center;
}
.text {
	gap: 4px;
	padding-bottom: 2px;
}
.text .arr {
	margin-left: 2px;
}
.pick {
	position: relative;
	height: 22px;
	border: 1px solid #c9cdd2;
	background: #fff;
}
.pick + .pick {
	border-left: 0;
}
.pick select {
	appearance: none;
	width: 100%;
	height: 20px;
	padding: 0 0 2px 3px;
}
.pick::after {
	content: "";
	position: absolute;
	right: 4px;
	top: 9px;
	border: 3px solid transparent;
	border-top-color: #666;
	border-bottom: 0;
	pointer-events: none;
}
.family { width: 113px; }
.size { width: 43px; }
.format { width: 134px; }

/* formula bar */
.formulabar {
	display: flex;
	flex: none;
	height: 29px;
	padding: 3px 0 4px;
	background: linear-gradient(#c9cdd4, #dde1ea 3px, #e6e9f2);
	border-bottom: 1px solid #8b8f97;
}
.namebox {
	display: flex;
	align-items: center;
	width: 160px;
	background: #fff;
	border-top: 1px solid #9a9ea6;
	border-bottom: 1px solid #9a9ea6;
}
.namebox input {
	width: 140px;
	margin-right: 7px;
	text-align: center;
	font-size: 12px;
}
.fx {
	display: flex;
	align-items: center;
	justify-content: space-between;
	width: 85px;
	padding: 0 6px;
	background: linear-gradient(90deg, #eceef1, #dfe2e7 40%);
	border: 1px solid #9a9ea6;
	border-radius: 11px 0 0 11px;
}
.knob {
	width: 8px;
	height: 8px;
	border-radius: 50%;
	background: radial-gradient(#a9adb3, #d3d6da);
}
.fx em {
	font: italic bold 15px/15px "Liberation Serif", serif;
}
.fx small {
	font: italic bold 11px/18px "Liberation Serif", serif;
}
.formula {
	flex: 1;
	min-width: 0;
	padding-left: 8px;
	background: #fff;
	border: 1px solid #9a9ea6;
	border-width: 1px 0;
	font: 14px/18px Lato, "Open Sans", sans-serif;
	color: #000;
}
.expand {
	width: 16px;
	border: 1px solid #b0b4ba;
	background: #dfe2e7;
}

/* grid */
.work {
	display: flex;
	flex: 1;
	min-height: 0;
	border-right: 4px solid #e6e9f2;
}
.sheet {
	flex: 1;
	min-width: 0;
	overflow: hidden;
}
table {
	width: 100%;
	table-layout: fixed;
	border-collapse: separate;
	border-spacing: 0;
	font: 25px/34px Lato, "Open Sans", sans-serif;
	color: #000;
}
.c0 { width: 51px; }
.ca { width: 52px; }
.cb { width: 228px; }
.cc { width: 116px; }
.cd { width: 149px; }
.ce { width: 68px; }
.cf { width: 158px; }
.cg { width: 125px; }
.ch { width: 132px; }
th {
	height: 37px;
	padding-top: 2px;
	background: #dfe2e7;
	border-right: 1px solid #adb1b6;
	border-bottom: 1px solid #adb1b6;
	font-weight: 400;
	color: #333;
}
thead th {
	height: 35px;
	padding-top: 0;
	font-size: 24px;
}
.corner {
	background: linear-gradient(135deg, #dfe2e7 50%, #b9bdc1 50%) no-repeat 20px 4px / 26px 26px #dfe2e7;
}
thead .sel {
	background: linear-gradient(#fec854, #fff07a);
	border-color: #c5923a;
	box-shadow: -1px 0 #c5923a;
}
tbody .sel {
	background: #ffd961;
	border-color: #c5923a;
	box-shadow: 0 -1px #c5923a;
}
td {
	height: 37px;
	padding: 2px 4px 0;
	border-right: 1px solid #d8d9db;
	border-bottom: 1px solid #d8d9db;
	vertical-align: bottom;
	white-space: nowrap;
}
.k {
	border-color: #000;
}
.v {
	border-right-color: #000;
}
.c {
	text-align: center;
	font-size: 24px;
}
.n {
	text-align: right;
}
.t {
	font-size: 23px;
}
.active {
	position: relative;
}
/* selection frame with the fill handle */
.active::before {
	content: "";
	position: absolute;
	inset: -2px;
	border: 1px solid #000;
	border-bottom-width: 2px;
	box-shadow: inset 0 0 0 1px #fff, inset 0 0 0 2px #000;
}
.active::after {
	content: "";
	position: absolute;
	right: -3px;
	bottom: -3px;
	width: 5px;
	height: 5px;
	background: #000;
	border: 1px solid #fff;
	border-width: 1px 0 0 1px;
}

/* scroll bars */
.vscroll {
	display: flex;
	flex-direction: column;
	width: 17px;
	background: #dde1ea;
	border-right: 1px solid #8b8f97;
}
.vscroll button {
	height: 18px;
}
.vscroll .split {
	height: 8px;
	border: 1px solid #777;
	background: linear-gradient(#fff 2px, #888 2px, #888 3px, #fff 3px);
}
.vscroll .before { flex: 48; }
.vscroll .after { flex: 119; }
.vscroll .thumb {
	flex: 315;
	border: 1px solid #868c98;
	border-radius: 1px;
	background: repeating-linear-gradient(#777 0 1px, transparent 1px 2px) no-repeat center / 8px 7px, linear-gradient(90deg, #f3f5f9, #d6dae2);
}
.sheetbar {
	display: flex;
	flex: none;
	height: 16px;
	padding-right: 20px;
	background: #dde1ea;
	box-shadow: inset 0 1px #9da1a9;
}
.sheets {
	display: flex;
	flex: 3 1 0;
}
.hscroll {
	display: flex;
	flex: 2 1 0;
}
.hscroll .split {
	width: 8px;
	border: 1px solid #777;
	background: linear-gradient(90deg, #fff 2px, #888 2px, #888 3px, #fff 3px);
}
.hscroll button {
	width: 17px;
}
.hscroll .thumb {
	flex: 440;
	border: 1px solid #868c98;
	border-radius: 1px;
	background: repeating-linear-gradient(90deg, #777 0 1px, transparent 1px 2px) no-repeat center / 8px 7px, linear-gradient(#f6f7fa, #d9dde5);
}
.hscroll .after { flex: 50; }
.navs {
	display: flex;
	width: 63px;
	padding: 0 2px;
	border-right: 1px solid #8b8f97;
}
.navs button {
	flex: 1;
}
.tab {
	position: relative;
	width: 61px;
	z-index: 2;
	font-size: 12px;
	color: #555;
}
.tab::after {
	content: "";
	position: absolute;
	inset: 0 -7px 0 0;
	background: #e8ebf0;
	border: 1px solid #9da1a9;
	border-width: 1px 1px 0 0;
	transform: skewX(-41deg);
}
.tab span {
	position: relative;
	z-index: 1;
}
.tab.on {
	z-index: 3;
	background: #fff;
	font-weight: 700;
	color: #444;
}
.tab.on::after {
	background: #fff;
	border-top-color: #fff;
}
.tab.new {
	width: 31px;
	z-index: 1;
}

/* status bar */
.status {
	display: flex;
	align-items: center;
	flex: none;
	height: 22px;
	padding: 0 4px 2px 8px;
	background: linear-gradient(#eceef0, #d5d8dc 50%, #b9bdc1);
	border-top: 1px solid #8b8f97;
}
.ready {
	width: 41px;
	line-height: 18px;
	border-right: 1px solid #8f9399;
}
.views {
	display: flex;
	align-items: center;
	gap: 1px;
	margin-left: auto;
	padding-left: 4px;
	border-left: 1px solid #a4a8ae;
}
.views button {
	width: 19px;
	height: 19px;
}
.percent {
	width: 42px;
	text-align: center;
}
.zoom {
	display: flex;
	align-items: center;
}
.zoom input {
	appearance: none;
	width: 100px;
	height: 16px;
	background: linear-gradient(#777, #777) no-repeat center / 100% 1px, linear-gradient(#777, #777) no-repeat center / 1px 8px;
}
.zoom input::-webkit-slider-thumb {
	appearance: none;
	width: 9px;
	height: 12px;
	border: 1px solid #666;
	border-radius: 1px 1px 5px 5px;
	background: #f6f6f6;
}

/* windows taskbar */
.taskbar {
	position: relative;
	display: flex;
	flex: none;
	height: 40px;
	background: linear-gradient(#272727 10px, transparent 10px), linear-gradient(90deg, #0c0f0c, #191815 8%, #181714 18%, #0a0c14 24%, #060912 60%, #0b0a0e 75%, #1c191a);
	color: #fff;
}
.wall {
	position: absolute;
	right: 0;
	top: 0;
}
.tb {
	width: 48px;
}
.apps {
	display: flex;
	margin-left: 2px;
}
.apps button {
	position: relative;
	width: 49px;
}
.run::after {
	content: "";
	position: absolute;
	left: 4px;
	right: 4px;
	bottom: 0;
	height: 2px;
	background: #76b9ed;
}
.current {
	background: #484a4c;
}
.current::after {
	left: 0;
	right: 0;
}
.tray {
	position: relative;
	display: flex;
	margin-left: auto;
	padding-right: 13px;
	font-size: 12px;
	line-height: 18px;
}
.tray button {
	width: 24px;
}
.tray .lang {
	width: 36px;
}
.tray .clock {
	width: 70px;
	font-size: 11px;
}
.tray .note {
	width: 40px;
}
```
